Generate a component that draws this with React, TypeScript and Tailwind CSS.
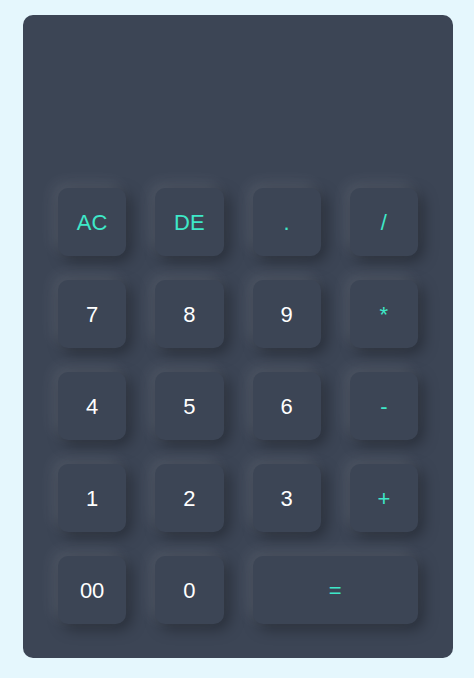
import React from "react";

const keys: { label: string; op?: boolean; wide?: boolean }[] = [
  { label: "AC", op: true },
  { label: "DE", op: true },
  { label: ".", op: true },
  { label: "/", op: true },
  { label: "7" },
  { label: "8" },
  { label: "9" },
  { label: "*", op: true },
  { label: "4" },
  { label: "5" },
  { label: "6" },
  { label: "-", op: true },
  { label: "1" },
  { label: "2" },
  { label: "3" },
  { label: "+", op: true },
  { label: "00" },
  { label: "0" },
  { label: "=", op: true, wide: true },
];

export default function App() {
  return (
    <div
      className="w-[474px] h-[678px] bg-[#e5f7fd] pt-[15px] pl-[23px]"
      style={{ fontFamily: '"Liberation Sans", Arial, sans-serif' }}
    >
      <div className="w-[430px] h-[643px] bg-[#3c4555] rounded-[10px] px-[35px] flex flex-col">
        <div className="h-[173px]" />
        <div className="grid grid-cols-4 gap-x-[29px] gap-y-[24px]">
          {keys.map((k) => (
            <button
              key={k.label}
              className={`h-[68px] rounded-[10px] bg-[#3c4555] flex items-center justify-center text-[22px] shadow-[-5px_-5px_15px_rgba(255,255,255,0.1),5px_5px_15px_rgba(0,0,0,0.35)] ${
                k.op ? "text-[#3ee8c8]" : "text-white"
              } ${k.wide ? "col-span-2" : ""}`}
            >
              {k.label}
            </button>
          ))}
        </div>
      </div>
    </div>
  );
}
